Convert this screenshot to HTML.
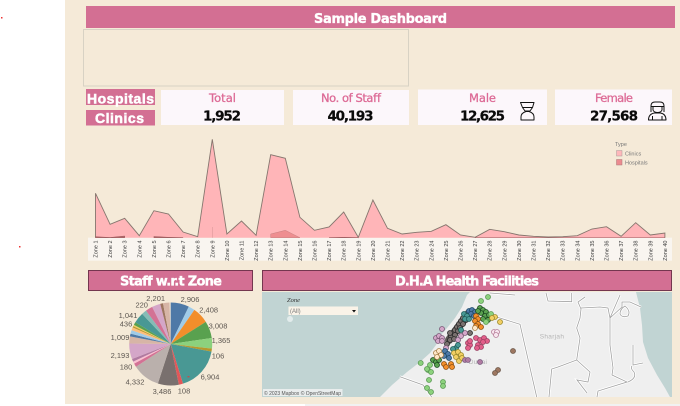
<!DOCTYPE html>
<html><head><meta charset="utf-8"><title>Sample Dashboard</title>
<style>
html,body{margin:0;padding:0;background:#fff;width:680px;height:406px;overflow:hidden}
svg{display:block;filter:blur(.35px)}
.t{font-family:"DejaVu Sans",sans-serif;font-weight:bold;fill:#fff;stroke:#fff;stroke-width:.35px;text-anchor:middle}
.h{font-family:"Liberation Sans",sans-serif;font-weight:bold;fill:#fff;stroke:#fff;stroke-width:.5px;text-anchor:middle;font-size:14px}
.k{font-family:"DejaVu Sans",sans-serif;fill:#dd6b96;stroke:#dd6b96;stroke-width:.3px;text-anchor:middle;font-size:11.500px}
.v{font-family:"DejaVu Sans",sans-serif;font-weight:bold;fill:#0a0a0a;stroke:#0a0a0a;stroke-width:.25px;text-anchor:middle;font-size:13.500px}
.z text{font-family:"Liberation Sans",sans-serif;font-size:5.500px;fill:#3c3c3c;text-anchor:end}
.l text{font-family:"Liberation Sans",sans-serif;font-size:7.500px;fill:#5c5650;text-anchor:middle}
.lg{font-family:"Liberation Sans",sans-serif;font-size:5.500px;fill:#777}
.d circle{r:2.500px;stroke-width:.8px}
</style></head><body>
<svg width="680" height="406" viewBox="0 0 680 406" xmlns="http://www.w3.org/2000/svg">
<rect width="680" height="406" fill="#fff"/>
<rect x="65" y="0" width="615" height="404" fill="#f5ead8"/>
<rect x="305" y="404" width="375" height="2" fill="#f1f1f1"/>
<rect x="1" y="17" width="1.500" height="1.500" fill="#e33"/>
<rect x="19" y="246" width="1.500" height="1.500" fill="#e33"/>

<!-- Title -->
<rect x="86" y="6" width="589" height="22" fill="#d36f93"/>
<text class="t" x="380.500" y="23" font-size="13" textLength="133" lengthAdjust="spacing">Sample Dashboard</text>
<rect x="83.500" y="29.500" width="325" height="56.500" fill="#f5ead8" stroke="#d8d2c4" stroke-width="1"/>

<!-- KPI -->
<rect x="86" y="89" width="69" height="16" fill="#d36f93"/>
<rect x="86" y="110" width="69" height="15.500" fill="#d36f93"/>
<text class="h" x="120.500" y="103.500" textLength="67" lengthAdjust="spacing">Hospitals</text>
<text class="h" x="119.500" y="123" textLength="49" lengthAdjust="spacing">Clinics</text>

<rect x="161" y="90" width="123" height="35" fill="#fcf7fb"/>
<rect x="293" y="90" width="116" height="35" fill="#fcf7fb"/>
<rect x="418" y="89.500" width="129" height="35.500" fill="#fcf7fb"/>
<rect x="555" y="89.500" width="117" height="35.500" fill="#fcf7fb"/>

<text class="k" x="222.500" y="102" textLength="27" lengthAdjust="spacing">Total</text>
<text class="v" x="222" y="120.500" textLength="38" lengthAdjust="spacing">1,952</text>
<text class="k" x="351" y="102" textLength="60" lengthAdjust="spacing">No. of Staff</text>
<text class="v" x="350.500" y="120.500" textLength="46" lengthAdjust="spacing">40,193</text>
<text class="k" x="482.500" y="102" textLength="27" lengthAdjust="spacing">Male</text>
<text class="v" x="482.500" y="120.500" textLength="45" lengthAdjust="spacing">12,625</text>
<text class="k" x="614" y="102" textLength="38" lengthAdjust="spacing">Female</text>
<text class="v" x="614" y="120.500" textLength="48" lengthAdjust="spacing">27,568</text>

<!-- Icons -->
<g fill="none" stroke="#111" stroke-width="1" stroke-linejoin="round">
<path d="M520.500 102.500H534L532.500 107.500H522.500ZM522.500 107.500L525 111H530L532.500 107.500M521 120V117Q521 113 526 111.500H529Q534 113 534 117V120Z"/>
<path d="M651 112V106Q651 102 655 102H660Q664 102 664 106V112M651 106.500H664M653 107V110Q654 112.500 657.500 112.500Q661 112.500 662 110V107M648.500 120Q648.500 114 654.500 113H660.500Q666 114 666 120ZM652.500 116V120M662 116V120"/>
</g>

<!-- Legend -->
<text class="lg" x="615" y="146">Type</text>
<rect x="616.500" y="150.500" width="5.500" height="5.500" fill="#ffb8bb" stroke="#a99" stroke-width=".5"/>
<text class="lg" x="625" y="155.500">Clinics</text>
<rect x="616.500" y="159.500" width="5.500" height="5.500" fill="#ec8b90" stroke="#a77" stroke-width=".5"/>
<text class="lg" x="625" y="164.500">Hospitals</text>

<!-- Area chart -->
<rect x="88" y="237.700" width="584" height="23" fill="#f9f5f0"/>
<path d="M95.500 237.700V193.300L110.100 224.300 124.700 218.300 139.300 235.700 153.900 210.700 168.500 214 183.100 232 197.700 236.700 212.300 139.300 226.900 234 241.500 221 256.100 235.300 270.700 154.700 285.300 158.300 299.900 217.300 314.500 230.300 329.100 227 343.700 212 358.300 237.300 372.900 200 387.500 228.300 402.100 234 416.700 232.300 431.300 231.300 445.900 224.700 460.500 235 475.100 237.300 489.700 229.300 504.300 231.700 518.900 235 533.500 236.300 548.100 237 562.700 236.700 577.300 235.700 591.900 229 606.500 226.700 621.100 236.300 635.700 222.700 650.300 235 664.900 233V237.700Z" fill="#ffb5b8"/>
<path d="M95.500 237.700V193.300L110.100 224.300 124.700 218.300 139.300 235.700 153.900 210.700 168.500 214 183.100 232 197.700 236.700 212.300 139.300 226.900 234 241.500 221 256.100 235.300 270.700 154.700 285.300 158.300 299.900 217.300 314.500 230.300 329.100 227 343.700 212 358.300 237.300 372.900 200 387.500 228.300 402.100 234 416.700 232.300 431.300 231.300 445.900 224.700 460.500 235 475.100 237.300 489.700 229.300 504.300 231.700 518.900 235 533.500 236.300 548.100 237 562.700 236.700 577.300 235.700 591.900 229 606.500 226.700 621.100 236.300 635.700 222.700 650.300 235 664.900 233V237.700" fill="none" stroke="#85766e" stroke-width=".9"/>
<path d="M270.700 237.700V234L285.300 230.300 299.900 237.700Z" fill="#ee8e90" stroke="#b77" stroke-width=".4"/>
<path d="M95.500 237.700V236.700L110.100 237.500 124.700 236V237.700ZM153.900 237.700V236.500L168.500 237.300 183.100 237.700ZM329.100 237.700L343.700 237.300 358.300 237.700ZM475 237.700H665" fill="#b86a6c" stroke="#9a5a5c" stroke-width=".5"/>
<path d="M212.300 237.700V227" stroke="#d99" stroke-width=".6"/>

<g class="z">
<text transform="translate(97.500 240.500) rotate(-90)">Zone 1</text>
<text transform="translate(112.100 240.500) rotate(-90)">Zone 2</text>
<text transform="translate(126.700 240.500) rotate(-90)">Zone 3</text>
<text transform="translate(141.300 240.500) rotate(-90)">Zone 4</text>
<text transform="translate(155.900 240.500) rotate(-90)">Zone 5</text>
<text transform="translate(170.500 240.500) rotate(-90)">Zone 6</text>
<text transform="translate(185.100 240.500) rotate(-90)">Zone 7</text>
<text transform="translate(199.700 240.500) rotate(-90)">Zone 8</text>
<text transform="translate(214.300 240.500) rotate(-90)">Zone 9</text>
<text transform="translate(228.900 240.500) rotate(-90)">Zone 10</text>
<text transform="translate(243.500 240.500) rotate(-90)">Zone 11</text>
<text transform="translate(258.100 240.500) rotate(-90)">Zone 12</text>
<text transform="translate(272.700 240.500) rotate(-90)">Zone 13</text>
<text transform="translate(287.300 240.500) rotate(-90)">Zone 14</text>
<text transform="translate(301.900 240.500) rotate(-90)">Zone 15</text>
<text transform="translate(316.500 240.500) rotate(-90)">Zone 16</text>
<text transform="translate(331.100 240.500) rotate(-90)">Zone 17</text>
<text transform="translate(345.700 240.500) rotate(-90)">Zone 18</text>
<text transform="translate(360.300 240.500) rotate(-90)">Zone 19</text>
<text transform="translate(374.900 240.500) rotate(-90)">Zone 20</text>
<text transform="translate(389.500 240.500) rotate(-90)">Zone 21</text>
<text transform="translate(404.100 240.500) rotate(-90)">Zone 22</text>
<text transform="translate(418.700 240.500) rotate(-90)">Zone 23</text>
<text transform="translate(433.300 240.500) rotate(-90)">Zone 24</text>
<text transform="translate(447.900 240.500) rotate(-90)">Zone 25</text>
<text transform="translate(462.500 240.500) rotate(-90)">Zone 26</text>
<text transform="translate(477.100 240.500) rotate(-90)">Zone 27</text>
<text transform="translate(491.700 240.500) rotate(-90)">Zone 28</text>
<text transform="translate(506.300 240.500) rotate(-90)">Zone 29</text>
<text transform="translate(520.900 240.500) rotate(-90)">Zone 30</text>
<text transform="translate(535.500 240.500) rotate(-90)">Zone 31</text>
<text transform="translate(550.100 240.500) rotate(-90)">Zone 32</text>
<text transform="translate(564.700 240.500) rotate(-90)">Zone 33</text>
<text transform="translate(579.300 240.500) rotate(-90)">Zone 34</text>
<text transform="translate(593.900 240.500) rotate(-90)">Zone 35</text>
<text transform="translate(608.500 240.500) rotate(-90)">Zone 36</text>
<text transform="translate(623.100 240.500) rotate(-90)">Zone 37</text>
<text transform="translate(637.700 240.500) rotate(-90)">Zone 38</text>
<text transform="translate(652.300 240.500) rotate(-90)">Zone 39</text>
<text transform="translate(666.900 240.500) rotate(-90)">Zone 40</text>
</g>

<!-- Section headers -->
<rect x="88.500" y="270.500" width="164" height="20" fill="#d36f93" stroke="#74364f" stroke-width="1"/>
<text class="t" x="171" y="285.500" font-size="13" textLength="102" lengthAdjust="spacing">Staff w.r.t Zone</text>
<rect x="262.500" y="270.500" width="409" height="20" fill="#d36f93" stroke="#74364f" stroke-width="1"/>
<text class="t" x="467" y="285.500" font-size="13" textLength="144" lengthAdjust="spacing">D.H.A Health Facilities</text>

<!-- Pie -->
<g transform="rotate(-90 170.700 344)" fill="none" stroke-width="41.500">
<circle cx="170.700" cy="344" r="20.750" pathLength="360" stroke="#4e79a7" stroke-dasharray="26 360" stroke-dashoffset="0"/>
<circle cx="170.700" cy="344" r="20.750" pathLength="360" stroke="#a0cbe8" stroke-dasharray="9 360" stroke-dashoffset="-26"/>
<circle cx="170.700" cy="344" r="20.750" pathLength="360" stroke="#f28e2b" stroke-dasharray="23 360" stroke-dashoffset="-35"/>
<circle cx="170.700" cy="344" r="20.750" pathLength="360" stroke="#59a14f" stroke-dasharray="24 360" stroke-dashoffset="-58"/>
<circle cx="170.700" cy="344" r="20.750" pathLength="360" stroke="#8cd17d" stroke-dasharray="15 360" stroke-dashoffset="-82"/>
<circle cx="170.700" cy="344" r="20.750" pathLength="360" stroke="#b6992d" stroke-dasharray="4 360" stroke-dashoffset="-97"/>
<circle cx="170.700" cy="344" r="20.750" pathLength="360" stroke="#499894" stroke-dasharray="62.500 360" stroke-dashoffset="-101"/>
<circle cx="170.700" cy="344" r="20.750" pathLength="360" stroke="#e15759" stroke-dasharray="6 360" stroke-dashoffset="-163.500"/>
<circle cx="170.700" cy="344" r="20.750" pathLength="360" stroke="#79706e" stroke-dasharray="29.500 360" stroke-dashoffset="-169.500"/>
<circle cx="170.700" cy="344" r="20.750" pathLength="360" stroke="#bab0ac" stroke-dasharray="39 360" stroke-dashoffset="-199"/>
<circle cx="170.700" cy="344" r="20.750" pathLength="360" stroke="#d37295" stroke-dasharray="5 360" stroke-dashoffset="-238"/>
<circle cx="170.700" cy="344" r="20.750" pathLength="360" stroke="#fabfd2" stroke-dasharray="3 360" stroke-dashoffset="-243"/>
<circle cx="170.700" cy="344" r="20.750" pathLength="360" stroke="#b07aa1" stroke-dasharray="4 360" stroke-dashoffset="-246"/>
<circle cx="170.700" cy="344" r="20.750" pathLength="360" stroke="#d4a6c8" stroke-dasharray="22 360" stroke-dashoffset="-250"/>
<circle cx="170.700" cy="344" r="20.750" pathLength="360" stroke="#d7b5a6" stroke-dasharray="10 360" stroke-dashoffset="-272"/>
<circle cx="170.700" cy="344" r="20.750" pathLength="360" stroke="#4e79a7" stroke-dasharray="4 360" stroke-dashoffset="-282"/>
<circle cx="170.700" cy="344" r="20.750" pathLength="360" stroke="#a0cbe8" stroke-dasharray="5 360" stroke-dashoffset="-286"/>
<circle cx="170.700" cy="344" r="20.750" pathLength="360" stroke="#ffbe7d" stroke-dasharray="4 360" stroke-dashoffset="-291"/>
<circle cx="170.700" cy="344" r="20.750" pathLength="360" stroke="#b6992d" stroke-dasharray="2 360" stroke-dashoffset="-295"/>
<circle cx="170.700" cy="344" r="20.750" pathLength="360" stroke="#f1ce63" stroke-dasharray="2 360" stroke-dashoffset="-297"/>
<circle cx="170.700" cy="344" r="20.750" pathLength="360" stroke="#59a14f" stroke-dasharray="4 360" stroke-dashoffset="-299"/>
<circle cx="170.700" cy="344" r="20.750" pathLength="360" stroke="#499894" stroke-dasharray="15 360" stroke-dashoffset="-303"/>
<circle cx="170.700" cy="344" r="20.750" pathLength="360" stroke="#86bcb6" stroke-dasharray="7 360" stroke-dashoffset="-318"/>
<circle cx="170.700" cy="344" r="20.750" pathLength="360" stroke="#d37295" stroke-dasharray="10 360" stroke-dashoffset="-325"/>
<circle cx="170.700" cy="344" r="20.750" pathLength="360" stroke="#d4a6c8" stroke-dasharray="12 360" stroke-dashoffset="-335"/>
<circle cx="170.700" cy="344" r="20.750" pathLength="360" stroke="#9d7660" stroke-dasharray="4 360" stroke-dashoffset="-347"/>
<circle cx="170.700" cy="344" r="20.750" pathLength="360" stroke="#d7b5a6" stroke-dasharray="9 360" stroke-dashoffset="-351"/>
</g>
<rect x="187.500" y="376.300" width="2" height="1" fill="#e33"/>
<g class="l">
<text x="190" y="301.800">2,906</text>
<text x="208.700" y="312.500">2,408</text>
<text x="218" y="328.500">3,008</text>
<text x="221" y="343.200">1,365</text>
<text x="218" y="358.500">106</text>
<text x="210" y="379.500">6,904</text>
<text x="184" y="393.500">108</text>
<text x="162" y="394.200">3,486</text>
<text x="135" y="384.500">4,332</text>
<text x="126" y="369.500">180</text>
<text x="120" y="358.200">2,193</text>
<text x="120" y="339.800">1,009</text>
<text x="126" y="326.500">436</text>
<text x="128" y="318.200">1,041</text>
<text x="141.700" y="307.500">220</text>
<text x="155.700" y="301.200">2,201</text>
</g>

<!-- Map -->
<rect x="262" y="292" width="410" height="105" fill="#c1d4d3"/>
<path d="M380 397L392 385 407 372 420 362 430 353 436 345 441 335 447 328 455 318 462 307 467 295 470 292H636L640 308 642 325 643 342 648 358 657 375 665 388 670 397Z" fill="#efefef"/>
<defs>
<path id="rd" fill="none" d="M490 315L520 324.300 536.700 397M490 293L515 295M546 293L548 301 571.700 301.700 571.700 293M585 297L578 302 581 309 580 318 576.700 328 580 338 576.700 360 558 367 551.700 369 549 397M581 308L600 307 608 308 610 318 610 345 613 368 612 375 627 382 598 391 597 397M576.700 360L590 372 588 382 577 380 587 393M610 318L622 307 622 302 630 302 641 307M610 318L620 295M625 306Q631 311 628 316 622 318 620 314 620 309 625 306M628 382Q637 378 634 372 630 368 632 366M633 345V365L643 363M400 376.700L423 385 431.700 397"/>
</defs>
<use href="#rd" stroke="#fff" stroke-width="2.500"/>
<use href="#rd" stroke="#a2a2a2" stroke-width=".8"/>
<text x="552" y="338.500" font-family="Liberation Sans,sans-serif" font-size="6.500" fill="#b5b5b5" text-anchor="middle" letter-spacing=".3">Sharjah</text>
<text x="478" y="364" font-family="Liberation Sans,sans-serif" font-size="6.500" fill="#b5b5b5" text-anchor="middle" letter-spacing=".3">Dubai</text>

<!-- Dots -->
<path d="M449 340L468 314" stroke="#5e5856" stroke-width="8" stroke-linecap="round" fill="none"/>
<g class="d">
<g stroke="#2b2b2b" fill="#79706e">
<circle cx="451" cy="336"/><circle cx="453" cy="333"/><circle cx="455" cy="330"/><circle cx="457" cy="327"/><circle cx="459" cy="324"/><circle cx="461" cy="321"/><circle cx="463" cy="318"/><circle cx="455" cy="335"/><circle cx="458" cy="331"/><circle cx="460" cy="328"/><circle cx="463" cy="324"/><circle cx="450" cy="340"/><circle cx="454" cy="339"/><circle cx="447" cy="344"/><circle cx="470" cy="333"/><circle cx="466" cy="320"/><circle cx="450" cy="333"/>
</g>
<g stroke="#7c5a78" fill="#d4a6c8">
<circle cx="436" cy="338"/><circle cx="439" cy="336"/><circle cx="442" cy="338"/><circle cx="438" cy="341"/><circle cx="442" cy="341"/><circle cx="442" cy="329"/><circle cx="461" cy="336"/><circle cx="465" cy="333"/><circle cx="458" cy="340"/><circle cx="446" cy="348"/>
</g>
<g stroke="#1c4a6a" fill="#4e79a7">
<circle cx="469" cy="311"/><circle cx="472" cy="310"/><circle cx="475" cy="312"/><circle cx="471" cy="314"/><circle cx="474" cy="316"/><circle cx="445" cy="351"/><circle cx="448" cy="354"/><circle cx="444" cy="356"/><circle cx="449" cy="358"/>
</g>
<g stroke="#1d5c58" fill="#499894">
<circle cx="464" cy="314"/><circle cx="467" cy="316"/><circle cx="465" cy="319"/><circle cx="469" cy="319"/><circle cx="456" cy="348"/><circle cx="458" cy="345"/><circle cx="453" cy="349"/><circle cx="461" cy="330"/>
</g>
<g stroke="#1c4a22" fill="#59a14f">
<circle cx="480" cy="308"/><circle cx="483" cy="310"/><circle cx="486" cy="312"/><circle cx="481" cy="313"/><circle cx="485" cy="316"/><circle cx="489" cy="315"/><circle cx="483" cy="319"/><circle cx="488" cy="320"/><circle cx="478" cy="311"/>
<circle cx="433" cy="360"/><circle cx="436" cy="362"/><circle cx="439" cy="360"/><circle cx="437" cy="365"/>
</g>
<g stroke="#5c9a55" fill="#8cd17d">
<circle cx="481" cy="301"/><circle cx="488" cy="297"/><circle cx="420.700" cy="363"/><circle cx="430" cy="365"/><circle cx="428" cy="370"/><circle cx="431" cy="372"/><circle cx="427" cy="369"/><circle cx="429" cy="380"/><circle cx="427" cy="388"/><circle cx="431" cy="392"/><circle cx="443" cy="382"/><circle cx="443" cy="386"/><circle cx="491" cy="314"/><circle cx="486" cy="322"/>
</g>
<g stroke="#8a4f10" fill="#f28e2b">
<circle cx="476" cy="316"/><circle cx="478" cy="319"/><circle cx="475" cy="321"/><circle cx="478" cy="324"/><circle cx="481" cy="327"/><circle cx="476" cy="326"/><circle cx="444" cy="364"/><circle cx="446" cy="367"/><circle cx="451" cy="364"/><circle cx="452" cy="367"/>
</g>
<g stroke="#a9814a" fill="#ffe7c8">
<circle cx="436" cy="353"/><circle cx="439" cy="351"/><circle cx="441" cy="355"/><circle cx="437" cy="357"/><circle cx="475" cy="328"/>
</g>
<g stroke="#9d8a2a" fill="#f1ce63">
<circle cx="454" cy="353"/><circle cx="458" cy="352"/><circle cx="461" cy="355"/><circle cx="456" cy="357"/><circle cx="459" cy="361"/><circle cx="462" cy="358"/><circle cx="495" cy="317"/><circle cx="500" cy="322"/><circle cx="492" cy="318"/>
</g>
<g stroke="#9c4162" fill="#e25f8a">
<circle cx="468" cy="343"/><circle cx="470" cy="345"/><circle cx="468" cy="348"/><circle cx="478" cy="345"/><circle cx="481" cy="347"/><circle cx="477" cy="348"/><circle cx="476" cy="338"/><circle cx="480" cy="340"/><circle cx="484" cy="338"/><circle cx="487" cy="341"/><circle cx="483" cy="342"/><circle cx="470" cy="341"/>
</g>
<g stroke="#b77f9a" fill="#f7e5ee">
<circle cx="494" cy="332"/><circle cx="497" cy="332"/><circle cx="496" cy="335"/>
</g>
<g stroke="#6e5a4c" fill="#9d7660">
<circle cx="513" cy="351"/><circle cx="498" cy="370"/><circle cx="495" cy="373"/>
</g>
<g stroke="#7a5c80" fill="#b07aa1">
<circle cx="480" cy="362"/><circle cx="465" cy="360"/><circle cx="468" cy="360"/>
</g>
</g>

<!-- Map overlays -->
<text x="287" y="302" font-family="Liberation Serif,serif" font-style="italic" font-size="6.500" fill="#333">Zone</text>
<rect x="288.500" y="306.500" width="69.500" height="8.500" fill="#faf3e8"/>
<text x="290" y="313" font-family="Liberation Sans,sans-serif" font-size="6" fill="#777">(All)</text>
<path d="M352 310H356L354 312.500Z" fill="#111"/>
<circle cx="290" cy="319" r="3" fill="#e3ecec"/>
<rect x="263" y="389" width="79.500" height="7" fill="#e9eded"/>
<text x="264" y="394.800" font-family="Liberation Sans,sans-serif" font-size="5.500" fill="#555" textLength="77" lengthAdjust="spacingAndGlyphs">© 2023 Mapbox © OpenStreetMap</text>
</svg>
</body></html>
